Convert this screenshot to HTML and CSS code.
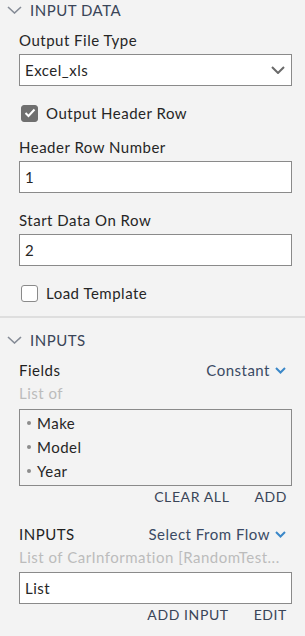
FILE: index.html
```html
<!DOCTYPE html>
<html lang="en">
<head>
  <meta charset="UTF-8">
  <title>Input Data</title>
  <link rel="stylesheet" href="styles.css">
</head>
<body>
  <div class="panel">
    <div class="section-head">
      <svg class="head-chevron" width="15" height="8" viewBox="0 0 15 8"><path d="M1 1 L7.5 7 L14 1" fill="none" stroke="#858b96" stroke-width="1.6"/></svg>
      <span>INPUT DATA</span>
    </div>

    <div class="section">
      <div class="field first">
        <label class="field-label">Output File Type</label>
        <div class="select">
          <span>Excel_xls</span>
          <svg width="14" height="8" viewBox="0 0 14 8"><path d="M1 1 L7 7 L13 1" fill="none" stroke="#6a6a6a" stroke-width="2"/></svg>
        </div>
      </div>

      <label class="check-row">
        <span class="box checked">
          <svg width="12" height="10" viewBox="0 0 12 10"><path d="M1.5 5 L4.5 8 L10.5 1.5" fill="none" stroke="#fff" stroke-width="2"/></svg>
        </span>
        Output Header Row
      </label>

      <div class="field after-check">
        <label class="field-label">Header Row Number</label>
        <input class="text-input" type="text" value="1">
      </div>

      <div class="field">
        <label class="field-label">Start Data On Row</label>
        <input class="text-input" type="text" value="2">
      </div>

      <label class="check-row">
        <span class="box"></span>
        Load Template
      </label>
    </div>

    <div class="divider"></div>

    <div class="section-head">
      <svg class="head-chevron" width="15" height="8" viewBox="0 0 15 8"><path d="M1 1 L7.5 7 L14 1" fill="none" stroke="#858b96" stroke-width="1.6"/></svg>
      <span>INPUTS</span>
    </div>

    <div class="section">
      <div class="mapping first">
        <div class="mapping-row">
          <span class="mapping-name">Fields</span>
          <span class="mapping-type">Constant
            <svg width="11" height="7" viewBox="0 0 11 7"><path d="M1 1 L5.5 5.5 L10 1" fill="none" stroke="#3a87c8" stroke-width="2"/></svg>
          </span>
        </div>
        <div class="mapping-hint">List of</div>
        <ul class="list-box">
          <li>Make</li>
          <li>Model</li>
          <li>Year</li>
        </ul>
        <div class="actions">
          <span>CLEAR ALL</span>
          <span>ADD</span>
        </div>
      </div>

      <div class="mapping next">
        <div class="mapping-row">
          <span class="mapping-name">INPUTS</span>
          <span class="mapping-type">Select From Flow
            <svg width="11" height="7" viewBox="0 0 11 7"><path d="M1 1 L5.5 5.5 L10 1" fill="none" stroke="#3a87c8" stroke-width="2"/></svg>
          </span>
        </div>
        <div class="mapping-hint">List of CarInformation [RandomTest...</div>
        <input class="text-input flow-input" type="text" value="List">
        <div class="actions">
          <span>ADD INPUT</span>
          <span>EDIT</span>
        </div>
      </div>
    </div>
  </div>
</body>
</html>
```

FILE: styles.css
```css
body {
  margin: 0;
  background-color: #f3f3f3;
  font-family: Lato, "Open Sans", sans-serif;
  font-size: 15px;
  letter-spacing: 0.5px;
  color: #262626;
}

.panel {
  width: 305px;
}

.section-head {
  display: flex;
  align-items: center;
  gap: 8px;
  height: 20px;
  padding-left: 7px;
  color: #3a4558;
  font-size: 15px;
  line-height: 20px;
}

.head-chevron {
  flex: none;
}

.section {
  padding: 0 13px 0 19px;
}

.field {
  margin-top: 14px;
}

.field.first {
  margin-top: 10px;
}

.field + .field {
  margin-top: 17px;
}

.field-label {
  display: block;
  line-height: 20px;
  margin-bottom: 4px;
}

.select,
.text-input {
  display: flex;
  align-items: center;
  justify-content: space-between;
  box-sizing: border-box;
  width: 100%;
  height: 32px;
  margin: 0;
  padding: 0 6px 0 5px;
  border: 1px solid #8a8a8a;
  background-color: #fff;
  font-family: inherit;
  font-size: 15px;
  letter-spacing: 0.5px;
  color: #262626;
  outline: none;
}

.check-row {
  display: flex;
  align-items: center;
  gap: 8px;
  margin-top: 17px;
  padding-left: 2px;
  line-height: 20px;
}

.box {
  display: flex;
  align-items: center;
  justify-content: center;
  box-sizing: border-box;
  width: 17px;
  height: 17px;
  border: 1px solid #8a8a8a;
  border-radius: 3px;
  background-color: #fff;
}

.box.checked {
  background-color: #6f6f6f;
  border-color: #6f6f6f;
}

.divider {
  height: 2px;
  margin-top: 13px;
  margin-bottom: 12px;
  background-color: #dedede;
}

.mapping.first {
  margin-top: 10px;
}

.mapping.next {
  margin-top: 19px;
}

.mapping-row {
  display: flex;
  justify-content: space-between;
  align-items: center;
  line-height: 20px;
  padding-right: 6px;
}

.mapping-name {
  color: #1f1f1f;
}

.mapping-type {
  display: flex;
  align-items: center;
  gap: 5px;
  color: #3a4a64;
}

.mapping-hint {
  margin-top: 3px;
  line-height: 20px;
  color: #bcbcbc;
  white-space: nowrap;
}

.list-box {
  list-style: none;
  margin: 6px 0 0;
  padding: 1px 7px 2px;
  border: 1px solid #8a8a8a;
}

.list-box li {
  display: flex;
  align-items: center;
  gap: 6px;
  line-height: 24px;
}

.list-box li::before {
  content: "";
  width: 4px;
  height: 4px;
  border-radius: 50%;
  background-color: #8c8c8c;
}

.flow-input {
  margin-top: 5px;
}

.actions {
  display: flex;
  justify-content: flex-end;
  gap: 25px;
  margin-top: 3px;
  padding-right: 5px;
  font-size: 14px;
  line-height: 16px;
  letter-spacing: 0.6px;
  color: #3a4558;
}
```
